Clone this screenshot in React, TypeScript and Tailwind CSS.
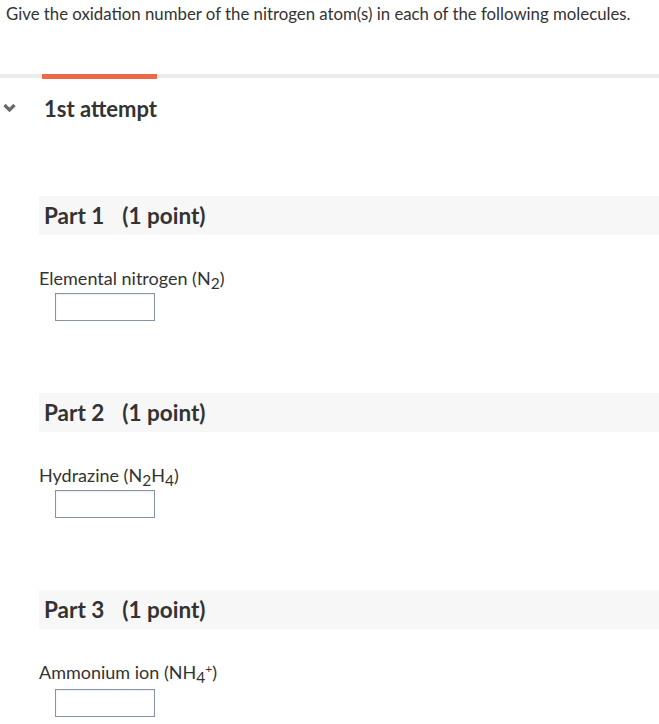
import React from "react";

function Sub({ children }: { children: React.ReactNode }) {
  return <span className="relative top-[4px] text-[15.5px]">{children}</span>;
}

function Part({ n, label, first }: { n: number; label: React.ReactNode; first?: boolean }) {
  return (
    <div className={first ? "mt-[76px]" : "mt-[72px]"}>
      <div className="ml-[39px] h-[39px] bg-[#f7f7f7] flex items-center pl-[5px]">
        <span className="text-[22.5px] font-bold text-[#333]">Part {n}</span>
        <span className="text-[22.5px] font-bold text-[#333] ml-[18px]">(1 point)</span>
      </div>
      <div className="ml-[39px] mt-[32px] text-[18px] leading-[22px] text-[#333] whitespace-nowrap">{label}</div>
      <div className="ml-[55px] mt-[3px] w-[100px] h-[28px] border border-[#8494a8] bg-white shadow-[inset_0_1px_2px_rgba(0,0,0,0.08)]" />
    </div>
  );
}

export default function App() {
  return (
    <div className="w-[659px] h-[724px] bg-white overflow-hidden" style={{ fontFamily: "Lato, 'Open Sans', sans-serif" }}>
      <div className="pl-[6px] pt-[4px] text-[16.8px] leading-[20px] text-[#333] whitespace-nowrap">
        Give the oxidation number of the nitrogen atom(s) in each of the following molecules.
      </div>
      <div className="mt-[50px] relative h-[4px] bg-[#ebebeb]">
        <div className="absolute left-[42px] top-[0px] w-[115px] h-[5px] bg-[#ec6847]" />
      </div>
      <div className="flex items-center mt-[18px] h-[24px]">
        <svg width="13" height="10" viewBox="0 0 13 10" className="ml-[3px]">
          <path d="M1.5 2 L6.5 7 L11.5 2" stroke="#6b6b6b" strokeWidth="3.2" fill="none" />
        </svg>
        <span className="ml-[28px] text-[22px] font-bold text-[#333]">1st attempt</span>
      </div>
      <Part n={1} first label={<>Elemental nitrogen (N<Sub>2</Sub>)</>} />
      <Part n={2} label={<>Hydrazine (N<Sub>2</Sub>H<Sub>4</Sub>)</>} />
      <Part n={3} label={<>Ammonium ion (NH<Sub>4</Sub><span className="relative top-[-6px] text-[12px]">+</span>)</>} />
    </div>
  );
}
